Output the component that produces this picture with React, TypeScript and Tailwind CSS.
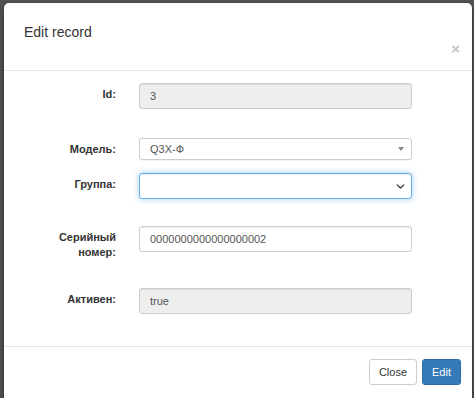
import { ChevronDown } from "lucide-react";

function Row({
  label,
  children,
  className = "",
}: {
  label: React.ReactNode;
  children: React.ReactNode;
  className?: string;
}) {
  return (
    <div className={`flex items-start ${className}`}>
      <label className="w-[92px] shrink-0 pt-[4px] text-right text-[11px] font-bold leading-[15px] text-[#333]">
        {label}
      </label>
      <div className="ml-[23px] w-[273px]">{children}</div>
    </div>
  );
}

export default function App() {
  const input =
    "flex h-[26px] w-full items-center rounded-[3px] border border-[#ccc] px-[10px] text-[11px] text-[#555] shadow-[inset_0_1px_1px_rgba(0,0,0,0.075)]";

  return (
    <div
      className="h-[398px] w-[474px] overflow-hidden bg-[#555] pt-[3px] pl-[4px]"
      style={{ fontFamily: '"Liberation Sans", Arial, sans-serif' }}
    >
      <div className="h-[400px] w-[468px] rounded-t-[5px] bg-white shadow-[0_3px_9px_rgba(0,0,0,0.5)]">
        {/* header */}
        <div className="relative h-[68px] border-b border-[#e5e5e5] px-[20px] pt-[20px]">
          <h4 className="text-[14px] leading-[18px] text-[#333]">Edit record</h4>
          <span className="absolute top-[38px] right-[12px] text-[15px] font-bold leading-none text-[#c4c4c4]">
            ×
          </span>
        </div>

        {/* body */}
        <div className="h-[276px] border-b border-[#e5e5e5] pt-[12px] pl-[20px]">
          <Row label="Id:">
            <div className={`${input} bg-[#eee]`}>3</div>
          </Row>

          <Row label="Модель:" className="mt-[29px]">
            <div className="flex h-[22px] w-full items-center justify-between rounded-[3px] border border-[#ccc] bg-white pr-[7px] pl-[10px] text-[11px] text-[#555] shadow-[0_1px_1px_rgba(0,0,0,0.05)]">
              <span>Q3X-Ф</span>
              <span className="h-0 w-0 border-x-[3px] border-t-[4px] border-x-transparent border-t-[#888]" />
            </div>
          </Row>

          <Row label="Группа:" className="mt-[13px]">
            <div className="flex h-[26px] w-full items-center justify-end rounded-[3px] border border-[#66afe9] bg-white pr-[4px] shadow-[inset_0_1px_1px_rgba(0,0,0,0.075),0_0_6px_rgba(102,175,233,0.6)]">
              <ChevronDown size={13} strokeWidth={2.5} className="text-[#333]" />
            </div>
          </Row>

          <Row
            label={
              <>
                Серийный
                <br />
                номер:
              </>
            }
            className="mt-[27px]"
          >
            <div className={`${input} bg-white`}>0000000000000000002</div>
          </Row>

          <Row label="Активен:" className="mt-[28px]">
            <div className={`${input} bg-[#eee]`}>true</div>
          </Row>
        </div>

        {/* footer */}
        <div className="flex justify-end gap-[5px] pt-[12px] pr-[11px]">
          <button className="h-[26px] rounded-[3px] border border-[#ccc] bg-white px-[9px] text-[11px] text-[#333]">
            Close
          </button>
          <button className="h-[26px] rounded-[3px] border border-[#2e6da4] bg-[#337ab7] px-[9px] text-[11px] text-white">
            Edit
          </button>
        </div>
      </div>
    </div>
  );
}
